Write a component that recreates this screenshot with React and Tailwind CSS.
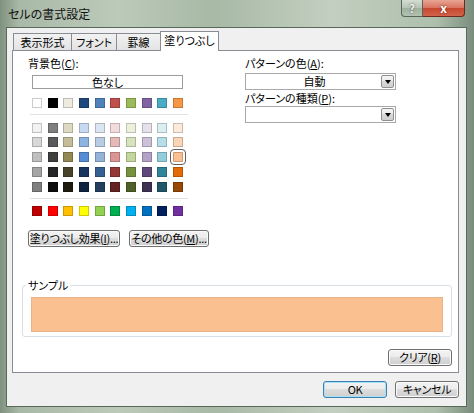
const base = ['bg-[#ffffff]', 'bg-[#000000]', 'bg-[#eeece1]', 'bg-[#1f497d]', 'bg-[#4f81bd]', 'bg-[#c0504d]', 'bg-[#9bbb59]', 'bg-[#8064a2]', 'bg-[#4bacc6]', 'bg-[#f79646]'];

const tints = [
  ['bg-[#f2f2f2]', 'bg-[#7f7f7f]', 'bg-[#ddd9c3]', 'bg-[#c6d9f0]', 'bg-[#dbe5f1]', 'bg-[#f2dcdb]', 'bg-[#ebf1dd]', 'bg-[#e5e0ec]', 'bg-[#dbeef3]', 'bg-[#fdeada]'],
  ['bg-[#d8d8d8]', 'bg-[#595959]', 'bg-[#c4bd97]', 'bg-[#8db3e2]', 'bg-[#b8cce4]', 'bg-[#e5b9b7]', 'bg-[#d7e3bc]', 'bg-[#ccc1d9]', 'bg-[#b7dde8]', 'bg-[#fbd5b5]'],
  ['bg-[#bfbfbf]', 'bg-[#3f3f3f]', 'bg-[#938953]', 'bg-[#548dd4]', 'bg-[#95b3d7]', 'bg-[#d99694]', 'bg-[#c3d69b]', 'bg-[#b2a2c7]', 'bg-[#92cddc]', 'bg-[#fac08f]'],
  ['bg-[#a5a5a5]', 'bg-[#262626]', 'bg-[#494429]', 'bg-[#17365d]', 'bg-[#366092]', 'bg-[#953734]', 'bg-[#76923c]', 'bg-[#5f497a]', 'bg-[#31859b]', 'bg-[#e36c09]'],
  ['bg-[#7f7f7f]', 'bg-[#0c0c0c]', 'bg-[#1d1b10]', 'bg-[#0f243e]', 'bg-[#244061]', 'bg-[#632423]', 'bg-[#4f6128]', 'bg-[#3f3151]', 'bg-[#205867]', 'bg-[#974806]'],
];

const standard = ['bg-[#c00000]', 'bg-[#ff0000]', 'bg-[#ffc000]', 'bg-[#ffff00]', 'bg-[#92d050]', 'bg-[#00b050]', 'bg-[#00b0f0]', 'bg-[#0070c0]', 'bg-[#002060]', 'bg-[#7030a0]'];

const tabs = [
  { label: '表示形式', w: 'w-[59px]' },
  { label: 'フォント', w: 'w-[46px]' },
  { label: '罫線', w: 'w-[45px]' },
];

function Swatch({ color, selected }) {
  return (
    <div
      className={`h-[10px] w-[10px] border border-black/20 ${color} ${
        selected ? 'rounded-[1px] outline-1 outline-offset-2 outline-[#5e5e5e]' : ''
      }`}
    />
  );
}

function SwatchRow({ colors, selectedIndex = -1 }) {
  return (
    <div className="flex gap-[5.67px]">
      {colors.map((c, i) => (
        <Swatch key={i} color={c} selected={i === selectedIndex} />
      ))}
    </div>
  );
}

function Btn({ children, className = '', isDefault = false }) {
  return (
    <div
      className={`flex h-[17px] items-center justify-center rounded-[3px] border bg-[linear-gradient(#f3f3f3_0%,#ebebeb_50%,#dddddd_50%,#cfcfcf_100%)] leading-none ${
        isDefault
          ? 'border-[#3c7fb1] shadow-[inset_0_0_0_1px_#a8e0f8]'
          : 'border-[#707070] shadow-[inset_0_0_0_1px_#fbfbfb]'
      } ${className}`}
    >
      <span className="whitespace-nowrap tracking-[-0.3px]">{children}</span>
    </div>
  );
}

function Combo({ value }) {
  return (
    <div className="flex h-[17px] w-[151px] items-center border border-[#a9a9a9] bg-white pl-[2px] pr-[1px]">
      <span className="flex-1 text-center leading-none">{value}</span>
      <div className="flex h-[13px] w-[13px] items-center justify-center rounded-[2px] border border-[#8e8f8f] bg-[linear-gradient(#f5f5f5_0%,#e9e9e9_50%,#d9d9d9_50%,#cfcfcf_100%)]">
        <div className="h-0 w-0 border-x-[3.5px] border-t-[4px] border-x-transparent border-t-black" />
      </div>
    </div>
  );
}

export default function App() {
  return (
    <div className="flex h-[413px] w-[474px] flex-col overflow-hidden bg-[linear-gradient(90deg,#7f917f_0%,#a9b9a7_4%,#bccab9_25%,#a8b9a6_45%,#c3cfc0_70%,#aebfac_92%,#7a8d7c_100%)] font-['Noto_Sans_CJK_JP',sans-serif] text-[11px] text-black [font-feature-settings:'palt']">
      <div className="flex h-[28px] shrink-0 items-start">
        <div className="pl-[8px] pt-[6px] text-[12px] leading-[15px] text-[#111]">セルの書式設定</div>
        <div className="ml-auto mr-[9px] flex">
          <div className="flex h-[17px] w-[22px] items-center justify-center rounded-bl-[4px] border border-t-0 border-[#56675a] bg-[linear-gradient(#d4ddd3_0%,#b7c4b5_50%,#9fb09d_50%,#b3c2b1_100%)] text-[11px] font-bold leading-none text-[#f4f6f4] [text-shadow:0_0_2px_#2b3a2e]">
            ?
          </div>
          <div className="flex h-[17px] w-[42px] items-center justify-center rounded-br-[4px] border border-l-0 border-t-0 border-[#6e2a1f] bg-[linear-gradient(#e8a595_0%,#d9735f_50%,#c7472f_50%,#d2634a_100%)] text-[12px] font-bold leading-none text-white [text-shadow:0_0_2px_#5a1a10]">
            x
          </div>
        </div>
      </div>

      <div className="mb-[7px] ml-[7px] mr-[8px] flex flex-1 flex-col bg-[#f0f0f0] shadow-[0_0_0_1px_#56695a]">
        <div className="ml-[6px] mt-[3px] flex h-[19px] items-end">
          {tabs.map((t) => (
            <div
              key={t.label}
              className={`-mr-px flex h-[17px] ${t.w} items-center justify-center border border-b-0 border-[#898c95] bg-[linear-gradient(#f2f2f2,#e3e3e3)] leading-none`}
            >
              {t.label}
            </div>
          ))}
          <div className="relative z-10 -mb-px flex h-[20px] w-[59px] items-center justify-center border border-b-0 border-[#898c95] bg-white pb-[2px] leading-none">
            塗りつぶし
          </div>
        </div>

        <div className="ml-[5px] flex h-[323px] w-[447px] flex-col border border-[#898c95] bg-white">
          <div className="flex">
            <div className="flex w-[232px] flex-col pl-[15px] pt-[5px]">
              <div className="leading-[14px]">
                背景色(<span className="underline">C</span>):
              </div>
              <div className="ml-[4px] mt-[5px] flex h-[14px] w-[151px] items-center justify-center border border-[#9c9c9c] leading-none">
                色なし
              </div>
              <div className="ml-[4px] mt-[9px]">
                <SwatchRow colors={base} />
              </div>
              <div className="ml-[2px] mt-[6px] h-px w-[158px] bg-[#e3e3e3]" />
              <div className="ml-[4px] mt-[7.5px] flex flex-col gap-[4.75px]">
                {tints.map((row, i) => (
                  <SwatchRow key={i} colors={row} selectedIndex={i === 2 ? 9 : -1} />
                ))}
              </div>
              <div className="ml-[2px] mt-[6px] h-px w-[158px] bg-[#e3e3e3]" />
              <div className="ml-[4px] mt-[7px]">
                <SwatchRow colors={standard} />
              </div>
              <div className="mt-[14px] flex gap-[9px]">
                <Btn className="w-[92px]">
                  塗りつぶし効果(<span className="underline">I</span>)...
                </Btn>
                <Btn className="w-[80px]">
                  その他の色(<span className="underline">M</span>)...
                </Btn>
              </div>
            </div>

            <div className="flex flex-col pt-[5px]">
              <div className="leading-[14px]">
                パターンの色(<span className="underline">A</span>):
              </div>
              <div className="mt-[3px]">
                <Combo value="自動" />
              </div>
              <div className="mt-[1px] leading-[14px]">
                パターンの種類(<span className="underline">P</span>):
              </div>
              <div className="mt-[1px]">
                <Combo value="" />
              </div>
            </div>
          </div>

          <div className="relative ml-[9px] mt-[38px] h-[52px] w-[430px] rounded-[3px] border border-[#d5dfe5]">
            <div className="absolute -top-[8px] left-[3px] bg-white px-[2px] leading-[14px]">サンプル</div>
            <div className="ml-[8px] mt-[11px] h-[35px] w-[412px] border border-[#eab48a] bg-[#fac08f]" />
          </div>

          <div className="mr-[6px] mt-[12px] self-end">
            <Btn className="w-[64px]">
              クリア(<span className="underline">R</span>)
            </Btn>
          </div>
        </div>

        <div className="mr-[7px] mt-[8px] flex justify-end gap-[8px]">
          <Btn className="w-[64px]" isDefault>
            OK
          </Btn>
          <Btn className="w-[64px]">キャンセル</Btn>
        </div>
      </div>
    </div>
  );
}
